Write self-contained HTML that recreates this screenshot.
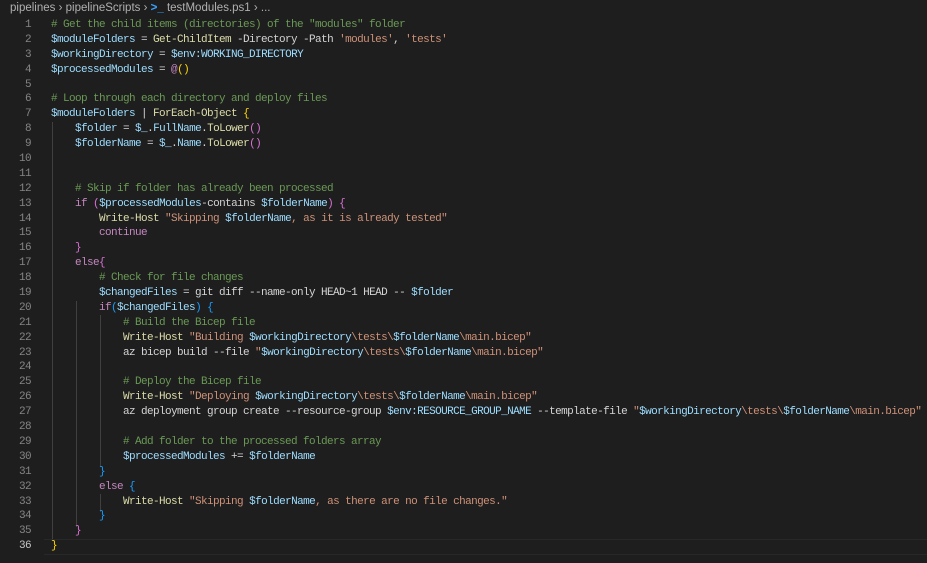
<!DOCTYPE html>
<html><head><meta charset="utf-8"><style>
html,body{margin:0;padding:0;background:#1e1e1e;width:927px;height:563px;overflow:hidden}
.bc{position:absolute;left:0;top:0;height:18px;width:927px;font:11.5px "Liberation Sans",sans-serif;color:#b0b0b0;line-height:17px;padding-left:10px;box-sizing:border-box;white-space:pre}
.ln{position:absolute;left:0;width:31px;text-align:right;font:11px "Liberation Mono",monospace;letter-spacing:-0.6px;color:#858585;line-height:14.886px}
.code{position:absolute;left:51px;font:11px "Liberation Mono",monospace;letter-spacing:-0.6px;color:#d4d4d4;line-height:14.886px;white-space:pre}
.c{color:#6a9955}.v{color:#9cdcfe}.f{color:#dcdcaa}.s{color:#ce9178}.k{color:#c586c0}.b1{color:#ffd700}.b2{color:#da70d6}.b3{color:#179fff}
.g{position:absolute;width:1px;background:#404040}
.cur{position:absolute;left:44px;top:539px;width:883px;height:14px;border-top:1px solid #282828;border-bottom:1px solid #282828}
</style></head><body>
<div class="bc">pipelines › pipelineScripts › <span style="color:#3aa3ff;font-weight:bold">&gt;_</span> testModules.ps1 › ...</div>
<div class="cur"></div>
<div class="g" style="left:52px;top:122px;height:417px"></div>
<div class="g" style="left:76px;top:301px;height:226px"></div>
<div class="g" style="left:100px;top:315px;height:152px"></div>
<div class="g" style="left:100px;top:494px;height:18px"></div>
<div class="ln" style="top:18px">1<br>2<br>3<br>4<br>5<br>6<br>7<br>8<br>9<br>10<br>11<br>12<br>13<br>14<br>15<br>16<br>17<br>18<br>19<br>20<br>21<br>22<br>23<br>24<br>25<br>26<br>27<br>28<br>29<br>30<br>31<br>32<br>33<br>34<br>35<br><span style="color:#c6c6c6">36</span></div>
<div class="code" style="top:18px"><span class="c"># Get the child items (directories) of the "modules" folder</span>
<span class="v">$moduleFolders</span> = <span class="f">Get-ChildItem</span> -Directory -Path <span class="s">'modules'</span>, <span class="s">'tests'</span>
<span class="v">$workingDirectory</span> = <span class="v">$env:WORKING_DIRECTORY</span>
<span class="v">$processedModules</span> = <span class="k">@</span><span class="b1">()</span>

<span class="c"># Loop through each directory and deploy files</span>
<span class="v">$moduleFolders</span> | <span class="f">ForEach-Object</span> <span class="b1">{</span>
    <span class="v">$folder</span> = <span class="v">$_</span>.<span class="v">FullName</span>.<span class="f">ToLower</span><span class="b2">()</span>
    <span class="v">$folderName</span> = <span class="v">$_</span>.<span class="v">Name</span>.<span class="f">ToLower</span><span class="b2">()</span>


    <span class="c"># Skip if folder has already been processed</span>
    <span class="k">if</span> <span class="b2">(</span><span class="v">$processedModules</span>-contains <span class="v">$folderName</span><span class="b2">)</span> <span class="b2">{</span>
        <span class="f">Write-Host</span> <span class="s">"Skipping </span><span class="v">$folderName</span><span class="s">, as it is already tested"</span>
        <span class="k">continue</span>
    <span class="b2">}</span>
    <span class="k">else</span><span class="b2">{</span>
        <span class="c"># Check for file changes</span>
        <span class="v">$changedFiles</span> = git diff --name-only HEAD~1 HEAD -- <span class="v">$folder</span>
        <span class="k">if</span><span class="b3">(</span><span class="v">$changedFiles</span><span class="b3">)</span> <span class="b3">{</span>
            <span class="c"># Build the Bicep file</span>
            <span class="f">Write-Host</span> <span class="s">"Building </span><span class="v">$workingDirectory</span><span class="s">\tests\</span><span class="v">$folderName</span><span class="s">\main.bicep"</span>
            az bicep build --file <span class="s">"</span><span class="v">$workingDirectory</span><span class="s">\tests\</span><span class="v">$folderName</span><span class="s">\main.bicep"</span>

            <span class="c"># Deploy the Bicep file</span>
            <span class="f">Write-Host</span> <span class="s">"Deploying </span><span class="v">$workingDirectory</span><span class="s">\tests\</span><span class="v">$folderName</span><span class="s">\main.bicep"</span>
            az deployment group create --resource-group <span class="v">$env:RESOURCE_GROUP_NAME</span> --template-file <span class="s">"</span><span class="v">$workingDirectory</span><span class="s">\tests\</span><span class="v">$folderName</span><span class="s">\main.bicep"</span>

            <span class="c"># Add folder to the processed folders array</span>
            <span class="v">$processedModules</span> += <span class="v">$folderName</span>
        <span class="b3">}</span>
        <span class="k">else</span> <span class="b3">{</span>
            <span class="f">Write-Host</span> <span class="s">"Skipping </span><span class="v">$folderName</span><span class="s">, as there are no file changes."</span>
        <span class="b3">}</span>
    <span class="b2">}</span>
<span class="b1">}</span></div>
</body></html>
